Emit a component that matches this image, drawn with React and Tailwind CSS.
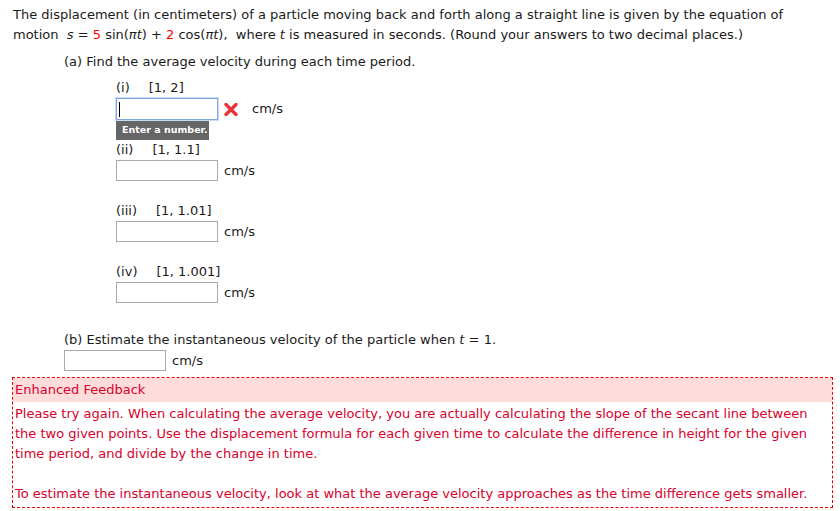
import React from "react";

function RedX() {
    return (
        <svg width="14" height="13" viewBox="0 0 14 13" className="shrink-0">
            <path d="M2 1.5 L12 11.5 M12 1.5 L2 11.5" stroke="#e8343a" strokeWidth="3.4" strokeLinecap="round" />
        </svg>
    );
}

function Box({ focused }) {
    if (focused) {
        return (
            <div className="w-[102px] h-[22px] border border-[#7ea6e0] shadow-[0_0_0_1px_#c9dbf5] bg-white flex items-center pl-[2px]">
                <div className="w-px h-[15px] bg-black" />
            </div>
        );
    }
    return <div className="w-[102px] h-[21px] border border-[#a9a9a9] bg-white" />;
}

function Part({ label, range, children }) {
    return (
        <div className="h-5 leading-5 flex">
            <span className="mr-[19px]">{label}</span>
            <span>{range}</span>
            {children}
        </div>
    );
}

export default function App() {
    return (
        <div
            className="w-[840px] h-[511px] bg-white text-[#1a1a1a] text-[13px] leading-5 overflow-hidden"
            style={{ fontFamily: '"DejaVu Sans", Verdana, sans-serif' }}
        >
            {/* question text */}
            <div className="pt-[5px] pl-[13px]">
                The displacement (in centimeters) of a particle moving back and forth along a straight line is given by the equation of
                <br />
                motion&nbsp; <i>s</i> = <span className="text-[#f00]">5</span> sin(<i>πt</i>) + <span className="text-[#f00]">2</span> cos(<i>πt</i>),&nbsp; where <i>t</i> is measured in seconds. (Round your answers to two decimal places.)
            </div>

            <div className="mt-[7px] pl-[64px]">(a) Find the average velocity during each time period.</div>

            <div className="pl-[116px] mt-[6px]">
                <Part label="(i)" range="[1, 2]" />
                <div className="flex items-center">
                    <Box focused />
                    <div className="ml-[6px]"><RedX /></div>
                    <span className="ml-[14px]">cm/s</span>
                </div>
                <div className="w-[93px] h-5 bg-[#666] text-white text-[9.5px] font-bold leading-5 pl-[6px] whitespace-nowrap overflow-hidden">
                    Enter a number.
                </div>

                <Part label="(ii)" range="[1, 1.1]" />
                <div className="flex items-center">
                    <Box />
                    <span className="ml-[6px]">cm/s</span>
                </div>

                <div className="mt-[20px]">
                    <Part label="(iii)" range="[1, 1.01]" />
                </div>
                <div className="flex items-center">
                    <Box />
                    <span className="ml-[6px]">cm/s</span>
                </div>

                <div className="mt-[20px]">
                    <Part label="(iv)" range="[1, 1.001]" />
                </div>
                <div className="flex items-center">
                    <Box />
                    <span className="ml-[6px]">cm/s</span>
                </div>
            </div>

            <div className="pl-[64px] mt-[27px]">
                <div>(b) Estimate the instantaneous velocity of the particle when <i>t</i> = 1.</div>
                <div className="flex items-center">
                    <Box />
                    <span className="ml-[6px]">cm/s</span>
                </div>
            </div>

            {/* feedback */}
            <div className="mt-[6px] ml-[12px] w-[821px] border border-dashed border-[#e00] text-[#d8002c]">
                <div className="bg-[#ffdcdc] h-6 leading-6 pl-[2px]">Enhanced Feedback</div>
                <div className="pl-[2px] pt-[2px] pb-[3px]">
                    Please try again. When calculating the average velocity, you are actually calculating the slope of the secant line between
                    <br />
                    the two given points. Use the displacement formula for each given time to calculate the difference in height for the given
                    <br />
                    time period, and divide by the change in time.
                    <br />
                    <br />
                    To estimate the instantaneous velocity, look at what the average velocity approaches as the time difference gets smaller.
                </div>
            </div>
        </div>
    );
}
